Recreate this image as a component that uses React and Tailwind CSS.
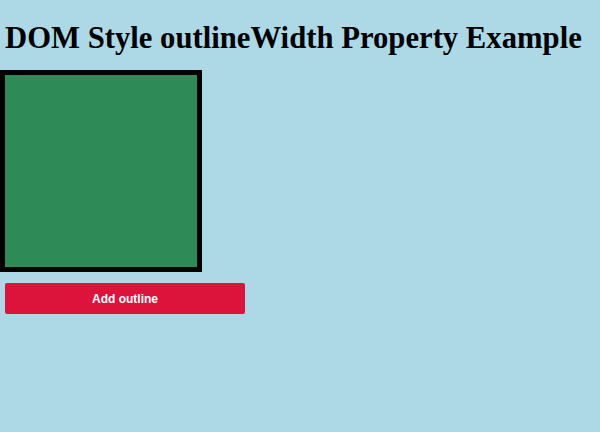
export default function App() {
  return (
    <div className="min-h-[432px] bg-[#add8e6] pt-[20px] px-[5px]">
      <h1 className="font-['Liberation_Serif',serif] font-bold text-[30.7px] leading-[36px] text-black whitespace-nowrap">
        DOM Style outlineWidth Property Example
      </h1>
      <div className="mt-[19px] w-[192px] h-[192px] bg-[#2e8b57] outline-[5px] outline-solid outline-black" />
      <button className="mt-[16px] w-[240px] h-[31px] rounded-[2px] bg-[#dc143c] text-white text-[12px] font-bold font-['Liberation_Sans',sans-serif] block">
        Add outline
      </button>
    </div>
  );
}
